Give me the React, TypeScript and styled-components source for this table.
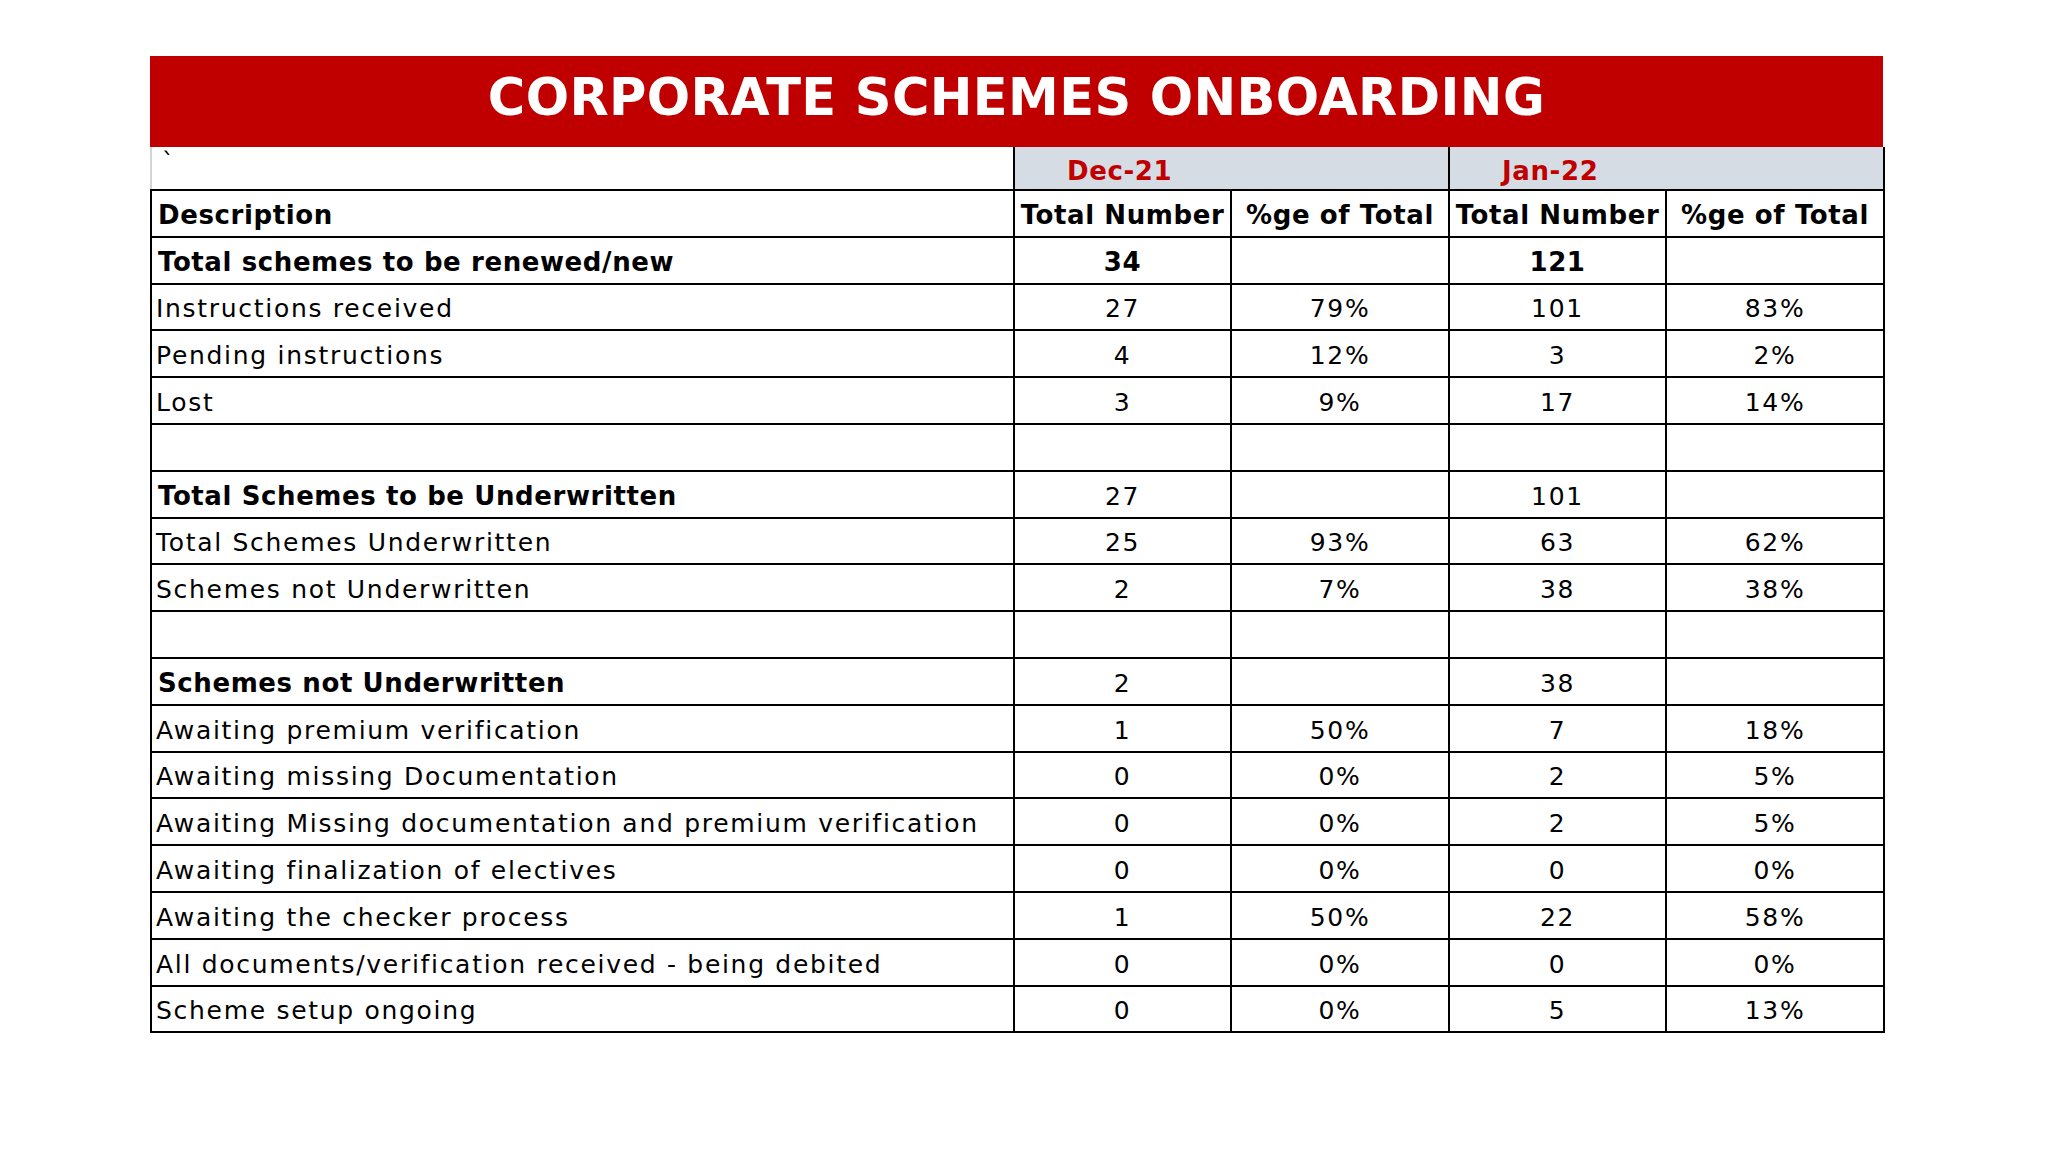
import React from "react";
import styled, { createGlobalStyle } from "styled-components";

const Global = createGlobalStyle`
  html, body { margin: 0; padding: 0; background: #ffffff; }
  body { font-family: "DejaVu Sans", Verdana, sans-serif; color: #000; }
`;

const Page = styled.div`
  padding: 56px 0 0 150px;
`;

const Sheet = styled.div`
  width: 1733px;
`;

const TitleBar = styled.div`
  height: 91px;
  background: #c00000;
  color: #ffffff;
  font-family: "DejaVu Sans", Verdana, sans-serif;
  font-weight: 700;
  font-size: 51px;
  letter-spacing: 0.4px;
  display: flex;
  align-items: center;
  justify-content: center;
  padding-bottom: 8px;
  box-sizing: border-box;
`;

const Table = styled.table`
  width: 100%;
  border-collapse: collapse;
  table-layout: fixed;
  font-family: "DejaVu Sans", Verdana, sans-serif;
`;

const Col = styled.col<{ $w: number }>`
  width: ${(p) => p.$w}px;
`;

const BlankCorner = styled.td`
  height: 42px;
  border-left: 2px solid #d4d4d4;
  border-right: 2px solid #000;
  border-bottom: 2px solid #000;
  padding: 0 0 0 10px;
  vertical-align: top;
  font-size: 24px;
  line-height: 30px;
`;

const PeriodCell = styled.td`
  background: #d6dce4;
  border: 2px solid #000;
  border-top: none;
  color: #c00000;
  font-weight: 700;
  font-size: 26px;
  letter-spacing: 0.6px;
  padding: 6px 0 0 52px;
  text-align: left;
  height: 42px;
  box-sizing: border-box;
`;

const Row = styled.tr`
  height: 46.8px;
`;

const Cell = styled.td<{ $bold?: boolean; $center?: boolean }>`
  border: 2px solid #000;
  padding: 4px ${(p) => (p.$center ? "0" : "6px")} 0 ${(p) => (p.$center ? "0" : p.$bold ? "6px" : "4px")};
  text-align: ${(p) => (p.$center ? "center" : "left")};
  font-weight: ${(p) => (p.$bold ? 700 : 400)};
  font-size: ${(p) => (p.$bold ? "26px" : "25px")};
  letter-spacing: ${(p) => (p.$bold ? "0.6px" : "1.7px")};
  white-space: nowrap;
  overflow: hidden;
  vertical-align: middle;
`;

type DataRow = {
  label: string;
  bold?: boolean;
  nums?: [string, string, string, string];
  boldNums?: boolean;
};

const rows: DataRow[] = [
  { label: "Total schemes to be renewed/new", bold: true, nums: ["34", "", "121", ""], boldNums: true },
  { label: "Instructions received", nums: ["27", "79%", "101", "83%"] },
  { label: "Pending instructions", nums: ["4", "12%", "3", "2%"] },
  { label: "Lost", nums: ["3", "9%", "17", "14%"] },
  { label: "" },
  { label: "Total Schemes to be Underwritten", bold: true, nums: ["27", "", "101", ""] },
  { label: "Total Schemes Underwritten", nums: ["25", "93%", "63", "62%"] },
  { label: "Schemes not Underwritten", nums: ["2", "7%", "38", "38%"] },
  { label: "" },
  { label: "Schemes not Underwritten", bold: true, nums: ["2", "", "38", ""] },
  { label: "Awaiting premium verification", nums: ["1", "50%", "7", "18%"] },
  { label: "Awaiting missing Documentation", nums: ["0", "0%", "2", "5%"] },
  { label: "Awaiting Missing documentation and premium verification", nums: ["0", "0%", "2", "5%"] },
  { label: "Awaiting finalization of electives", nums: ["0", "0%", "0", "0%"] },
  { label: "Awaiting the checker process", nums: ["1", "50%", "22", "58%"] },
  { label: "All documents/verification received - being debited", nums: ["0", "0%", "0", "0%"] },
  { label: "Scheme setup ongoing", nums: ["0", "0%", "5", "13%"] },
];

export default function App() {
  return (
    <>
      <Global />
      <Page>
        <Sheet>
          <TitleBar>CORPORATE SCHEMES ONBOARDING</TitleBar>
          <Table>
            <colgroup>
              <Col $w={863} />
              <Col $w={217} />
              <Col $w={218} />
              <Col $w={217} />
              <Col $w={218} />
            </colgroup>
            <tbody>
              <tr>
                <BlankCorner>`</BlankCorner>
                <PeriodCell colSpan={2}>Dec-21</PeriodCell>
                <PeriodCell colSpan={2}>Jan-22</PeriodCell>
              </tr>
              <Row>
                <Cell $bold>Description</Cell>
                <Cell $bold $center>Total Number</Cell>
                <Cell $bold $center>%ge of Total</Cell>
                <Cell $bold $center>Total Number</Cell>
                <Cell $bold $center>%ge of Total</Cell>
              </Row>
              {rows.map((r, i) => (
                <Row key={i}>
                  <Cell $bold={r.bold}>{r.label}</Cell>
                  {(r.nums ?? ["", "", "", ""]).map((n, j) => (
                    <Cell key={j} $center $bold={r.boldNums}>
                      {n}
                    </Cell>
                  ))}
                </Row>
              ))}
            </tbody>
          </Table>
        </Sheet>
      </Page>
    </>
  );
}
